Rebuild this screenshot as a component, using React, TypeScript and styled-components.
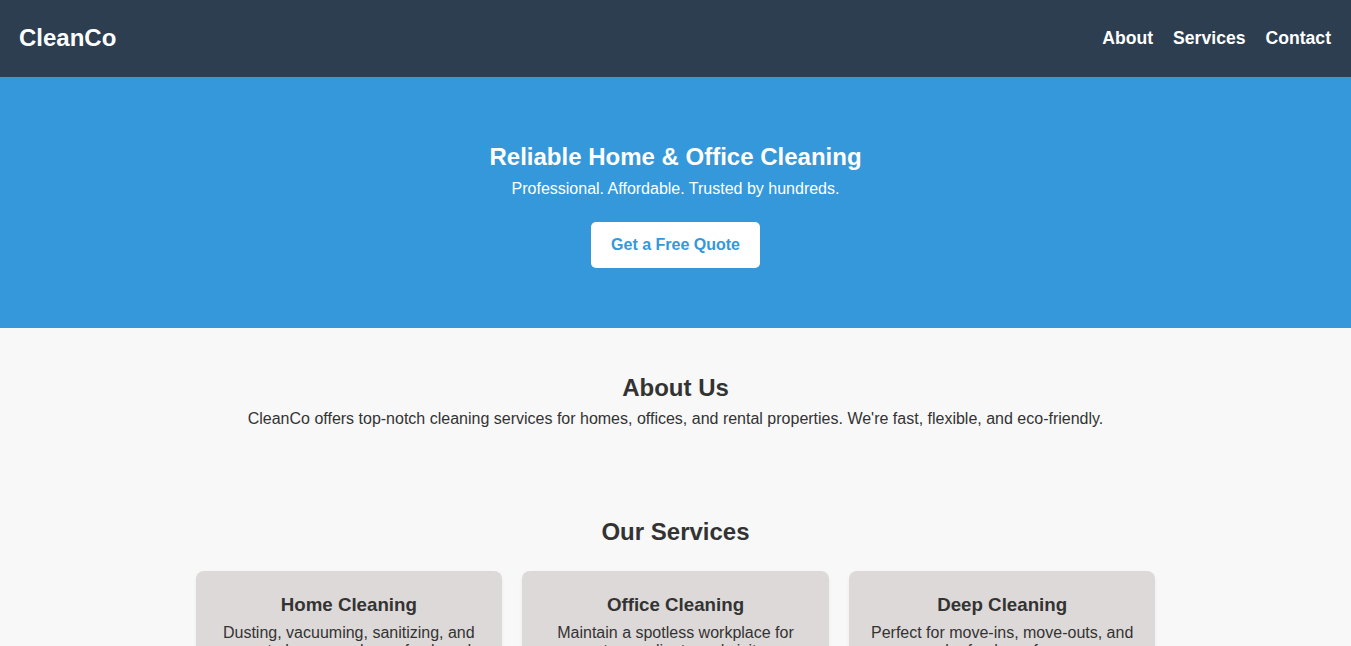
import React from "react";
import styled, { createGlobalStyle } from "styled-components";

interface Service {
  title: string;
  text: string;
}

const services: Service[] = [
  {
    title: "Home Cleaning",
    text: "Dusting, vacuuming, sanitizing, and more to keep your home fresh and healthy.",
  },
  {
    title: "Office Cleaning",
    text: "Maintain a spotless workplace for your team, clients and visitors.",
  },
  {
    title: "Deep Cleaning",
    text: "Perfect for move-ins, move-outs, and seasonal refreshes of any space.",
  },
];

function App() {
  return (
    <>
      <GlobalStyle />
      <Header>
        <Logo>CleanCo</Logo>
        <Nav>
          <NavLink href="#about">About</NavLink>
          <NavLink href="#services">Services</NavLink>
          <NavLink href="#contact">Contact</NavLink>
        </Nav>
      </Header>
      <Hero>
        <HeroTitle>Reliable Home &amp; Office Cleaning</HeroTitle>
        <HeroText>Professional. Affordable. Trusted by hundreds.</HeroText>
        <QuoteButton href="#contact">Get a Free Quote</QuoteButton>
      </Hero>
      <About id="about">
        <SectionTitle>About Us</SectionTitle>
        <AboutText>
          CleanCo offers top-notch cleaning services for homes, offices, and
          rental properties. We're fast, flexible, and eco-friendly.
        </AboutText>
      </About>
      <Services id="services">
        <SectionTitle>Our Services</SectionTitle>
        <CardGrid>
          {services.map((s) => (
            <Card key={s.title}>
              <CardTitle>{s.title}</CardTitle>
              <CardText>{s.text}</CardText>
            </Card>
          ))}
        </CardGrid>
      </Services>
    </>
  );
}

export default App;

const GlobalStyle = createGlobalStyle`
  * {
    box-sizing: border-box;
  }
  body {
    margin: 0;
    font-family: "Liberation Sans", Arial, sans-serif;
    background-color: #f8f8f8;
    color: #333;
  }
`;

const Header = styled.header`
  height: 77px;
  padding: 0 20px 0 19px;
  background-color: #2c3e50;
  display: flex;
  align-items: center;
  justify-content: space-between;
`;

const Logo = styled.h1`
  margin: 0 0 2px;
  font-size: 24px;
  font-weight: bold;
  color: #fff;
`;

const Nav = styled.nav`
  display: flex;
  gap: 20px;
`;

const NavLink = styled.a`
  color: #fff;
  text-decoration: none;
  font-weight: bold;
  font-size: 17.6px;
`;

const Hero = styled.section`
  height: 251px;
  padding-top: 66px;
  background-color: #3498db;
  color: #fff;
  display: flex;
  flex-direction: column;
  align-items: center;
  text-align: center;
`;

const HeroTitle = styled.h2`
  margin: 0;
  font-size: 24px;
  line-height: 28px;
`;

const HeroText = styled.p`
  margin: 9px 0 0;
  font-size: 16px;
  line-height: 18px;
`;

const QuoteButton = styled.a`
  margin-top: 24px;
  display: inline-block;
  background-color: #fff;
  color: #3498db;
  font-weight: bold;
  font-size: 16px;
  line-height: 18px;
  padding: 14px 20px;
  border-radius: 5px;
  text-decoration: none;
`;

const About = styled.section`
  padding: 46px 20px 0;
  text-align: center;
`;

const SectionTitle = styled.h2`
  margin: 0;
  font-size: 24px;
  line-height: 28px;
`;

const AboutText = styled.p`
  margin: 8px 0 0;
  font-size: 16px;
  line-height: 18px;
`;

const Services = styled.section`
  padding-top: 90px;
  text-align: center;
`;

const CardGrid = styled.div`
  max-width: 960px;
  margin: 25px auto 0;
  display: grid;
  grid-template-columns: repeat(3, 1fr);
  gap: 20px;
`;

const Card = styled.div`
  background-color: #ddd9d8;
  border-radius: 8px;
  padding: 23px 20px 20px;
  box-shadow: 0 2px 4px rgba(0, 0, 0, 0.05);
`;

const CardTitle = styled.h3`
  margin: 0;
  font-size: 18.72px;
  line-height: 22px;
`;

const CardText = styled.p`
  margin: 8px 0 0;
  font-size: 16px;
  line-height: 18px;
`;
